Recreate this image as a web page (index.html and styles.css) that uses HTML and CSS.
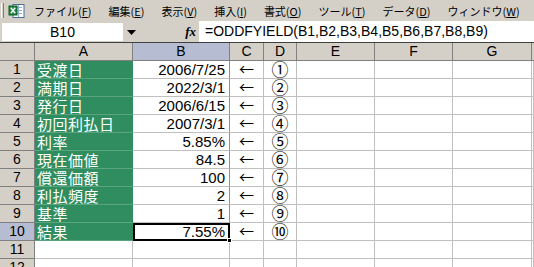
FILE: index.html
```html
<!DOCTYPE html>
<html lang="ja">
<head>
<meta charset="utf-8">
<link rel="stylesheet" href="styles.css">
</head>
<body>
<div class="app">
  <div class="menubar">
    <span class="grip"></span>
    <svg class="xlicon" width="18" height="16" viewBox="0 0 18 16">
      <rect x="5" y="1.5" width="11" height="13" fill="#fff" stroke="#4a6f9c"/>
      <path d="M7 4.5h7M7 7.5h7M7 10.5h7M10.5 2v12" stroke="#8fb0d8" stroke-width="1"/>
      <rect x="1" y="3" width="8" height="9" fill="#1f8a3b" stroke="#0c5a22"/>
      <path d="M2.8 4.8l4.4 5.4M7.2 4.8l-4.4 5.4" stroke="#fff" stroke-width="1.4"/>
    </svg>
    <span class="mi">ファイル(<u>F</u>)</span>
    <span class="mi">編集(<u>E</u>)</span>
    <span class="mi">表示(<u>V</u>)</span>
    <span class="mi">挿入(<u>I</u>)</span>
    <span class="mi">書式(<u>O</u>)</span>
    <span class="mi">ツール(<u>T</u>)</span>
    <span class="mi">データ(<u>D</u>)</span>
    <span class="mi">ウィンドウ(<u>W</u>)</span>
    <span class="mi">ヘルプ(<u>H</u>)</span>
  </div>
  <div class="formulabar">
    <div class="namebox">B10</div>
    <div class="dropdown"><svg width="9" height="5" viewBox="0 0 9 5"><path d="M0 0h9L4.5 5z" fill="#000"/></svg></div>
    <div class="fx">fx</div>
    <div class="formula">=ODDFYIELD(B1,B2,B3,B4,B5,B6,B7,B8,B9)</div>
  </div>
  <div class="sheet">
    <div class="ch corner"></div>
    <div class="ch">A</div>
    <div class="ch sel">B</div>
    <div class="ch">C</div>
    <div class="ch">D</div>
    <div class="ch">E</div>
    <div class="ch">F</div>
    <div class="ch">G</div>
    <div class="ch last"></div>

    <div class="rh">1</div><div class="c lab">受渡日</div><div class="c num">2006/7/25</div><div class="c arr">←</div><div class="c circ">①</div><div class="c"></div><div class="c"></div><div class="c"></div><div class="c"></div>
    <div class="rh">2</div><div class="c lab">満期日</div><div class="c num">2022/3/1</div><div class="c arr">←</div><div class="c circ">②</div><div class="c"></div><div class="c"></div><div class="c"></div><div class="c"></div>
    <div class="rh">3</div><div class="c lab">発行日</div><div class="c num">2006/6/15</div><div class="c arr">←</div><div class="c circ">③</div><div class="c"></div><div class="c"></div><div class="c"></div><div class="c"></div>
    <div class="rh">4</div><div class="c lab">初回利払日</div><div class="c num">2007/3/1</div><div class="c arr">←</div><div class="c circ">④</div><div class="c"></div><div class="c"></div><div class="c"></div><div class="c"></div>
    <div class="rh">5</div><div class="c lab">利率</div><div class="c num">5.85%</div><div class="c arr">←</div><div class="c circ">⑤</div><div class="c"></div><div class="c"></div><div class="c"></div><div class="c"></div>
    <div class="rh">6</div><div class="c lab">現在価値</div><div class="c num">84.5</div><div class="c arr">←</div><div class="c circ">⑥</div><div class="c"></div><div class="c"></div><div class="c"></div><div class="c"></div>
    <div class="rh">7</div><div class="c lab">償還価額</div><div class="c num">100</div><div class="c arr">←</div><div class="c circ">⑦</div><div class="c"></div><div class="c"></div><div class="c"></div><div class="c"></div>
    <div class="rh">8</div><div class="c lab">利払頻度</div><div class="c num">2</div><div class="c arr">←</div><div class="c circ">⑧</div><div class="c"></div><div class="c"></div><div class="c"></div><div class="c"></div>
    <div class="rh">9</div><div class="c lab">基準</div><div class="c num">1</div><div class="c arr">←</div><div class="c circ">⑨</div><div class="c"></div><div class="c"></div><div class="c"></div><div class="c"></div>
    <div class="rh sel">10</div><div class="c lab">結果</div><div class="c num active">7.55%<span class="handle"></span></div><div class="c arr">←</div><div class="c circ">⑩</div><div class="c"></div><div class="c"></div><div class="c"></div><div class="c"></div>
    <div class="rh">11</div><div class="c"></div><div class="c"></div><div class="c"></div><div class="c"></div><div class="c"></div><div class="c"></div><div class="c"></div><div class="c"></div>
    <div class="rh">12</div><div class="c"></div><div class="c"></div><div class="c"></div><div class="c"></div><div class="c"></div><div class="c"></div><div class="c"></div><div class="c"></div>
  </div>
</div>
</body>
</html>
```
FILE: styles.css
```css
* { box-sizing: border-box; }
html, body { margin: 0; padding: 0; }
body {
  width: 534px;
  height: 267px;
  overflow: hidden;
  background: #d4d0c8;
  font-family: "Noto Sans CJK JP", "Noto Sans", sans-serif;
  color: #000;
}
.app { width: 534px; height: 267px; overflow: hidden; }

.menubar {
  height: 21px;
  display: flex;
  align-items: center;
  font-size: 11px;
  white-space: nowrap;
  overflow: hidden;
}
.menubar > * { flex-shrink: 0; }
.grip {
  width: 3px;
  height: 15px;
  margin-left: 1px;
  border-left: 1px solid #fff;
  border-right: 1px solid #808080;
}
.xlicon { margin-left: 4px; margin-right: 8px; }
.mi { margin-right: 17px; }
.mi u { text-decoration-thickness: 1px; text-underline-offset: 1px; }

.formulabar {
  height: 21px;
  display: flex;
  align-items: stretch;
}
.namebox {
  width: 121px;
  margin: 2px 0 1px 2px;
  background: #fff;
  font-family: "Liberation Sans", sans-serif;
  font-size: 14px;
  text-align: center;
  line-height: 18px;
}
.dropdown {
  width: 16px;
  display: flex;
  align-items: center;
  justify-content: center;
  padding-top: 2px;
}
.fx {
  width: 60px;
  text-align: right;
  padding-right: 3px;
  font-family: "Liberation Serif", serif;
  font-style: italic;
  font-weight: bold;
  font-size: 13px;
  line-height: 21px;
}
.formula {
  flex: 1;
  background: #fff;
  padding-left: 6px;
  font-family: "Liberation Sans", sans-serif;
  font-size: 14px;
  line-height: 21px;
  white-space: nowrap;
  overflow: hidden;
}

.sheet {
  display: grid;
  grid-template-columns: 35px 98px 97px 34px 33px 78px 78px 79px 2px;
  grid-auto-rows: 18px;
  grid-template-rows: 18px;
  border-top: 1px solid #404040;
  background: #fff;
}
.ch, .rh {
  background: #d4d0c8;
  border-right: 1px solid #808080;
  border-bottom: 1px solid #808080;
  font-family: "Liberation Sans", sans-serif;
  font-size: 14px;
  line-height: 17px;
  text-align: center;
  color: #000;
}
.ch.sel, .rh.sel { background: #b6bdd2; }
.ch.corner { background: #d4d0c8; }
.ch.last { border-right: none; }

.c {
  position: relative;
  border-right: 1px solid #c0c0c0;
  border-bottom: 1px solid #c0c0c0;
  font-size: 15px;
  line-height: 17px;
  white-space: nowrap;
  overflow: hidden;
}
.lab {
  background: #2f8d5f;
  color: #fff;
  padding-left: 2px;
  border-right-color: #2f8d5f;
  border-bottom-color: #5aa57f;
  letter-spacing: 0.5px;
}
.num {
  text-align: right;
  padding-right: 4px;
  font-family: "Liberation Sans", sans-serif;
  font-size: 15px;
  border-right-color: #909090;
}
.arr { text-align: center; font-family: "Noto Sans CJK JP", sans-serif; font-size: 15px; line-height: 16px; }
.circ { text-align: center; font-family: "Noto Sans CJK JP", sans-serif; font-size: 17px; line-height: 16px; }

.active {
  overflow: visible;
  outline: 2px solid #000;
  outline-offset: -2px;
  z-index: 1;
}
.handle {
  position: absolute;
  right: -3px;
  bottom: -3px;
  width: 5px;
  height: 5px;
  background: #000;
  border: 1px solid #fff;
}
```
